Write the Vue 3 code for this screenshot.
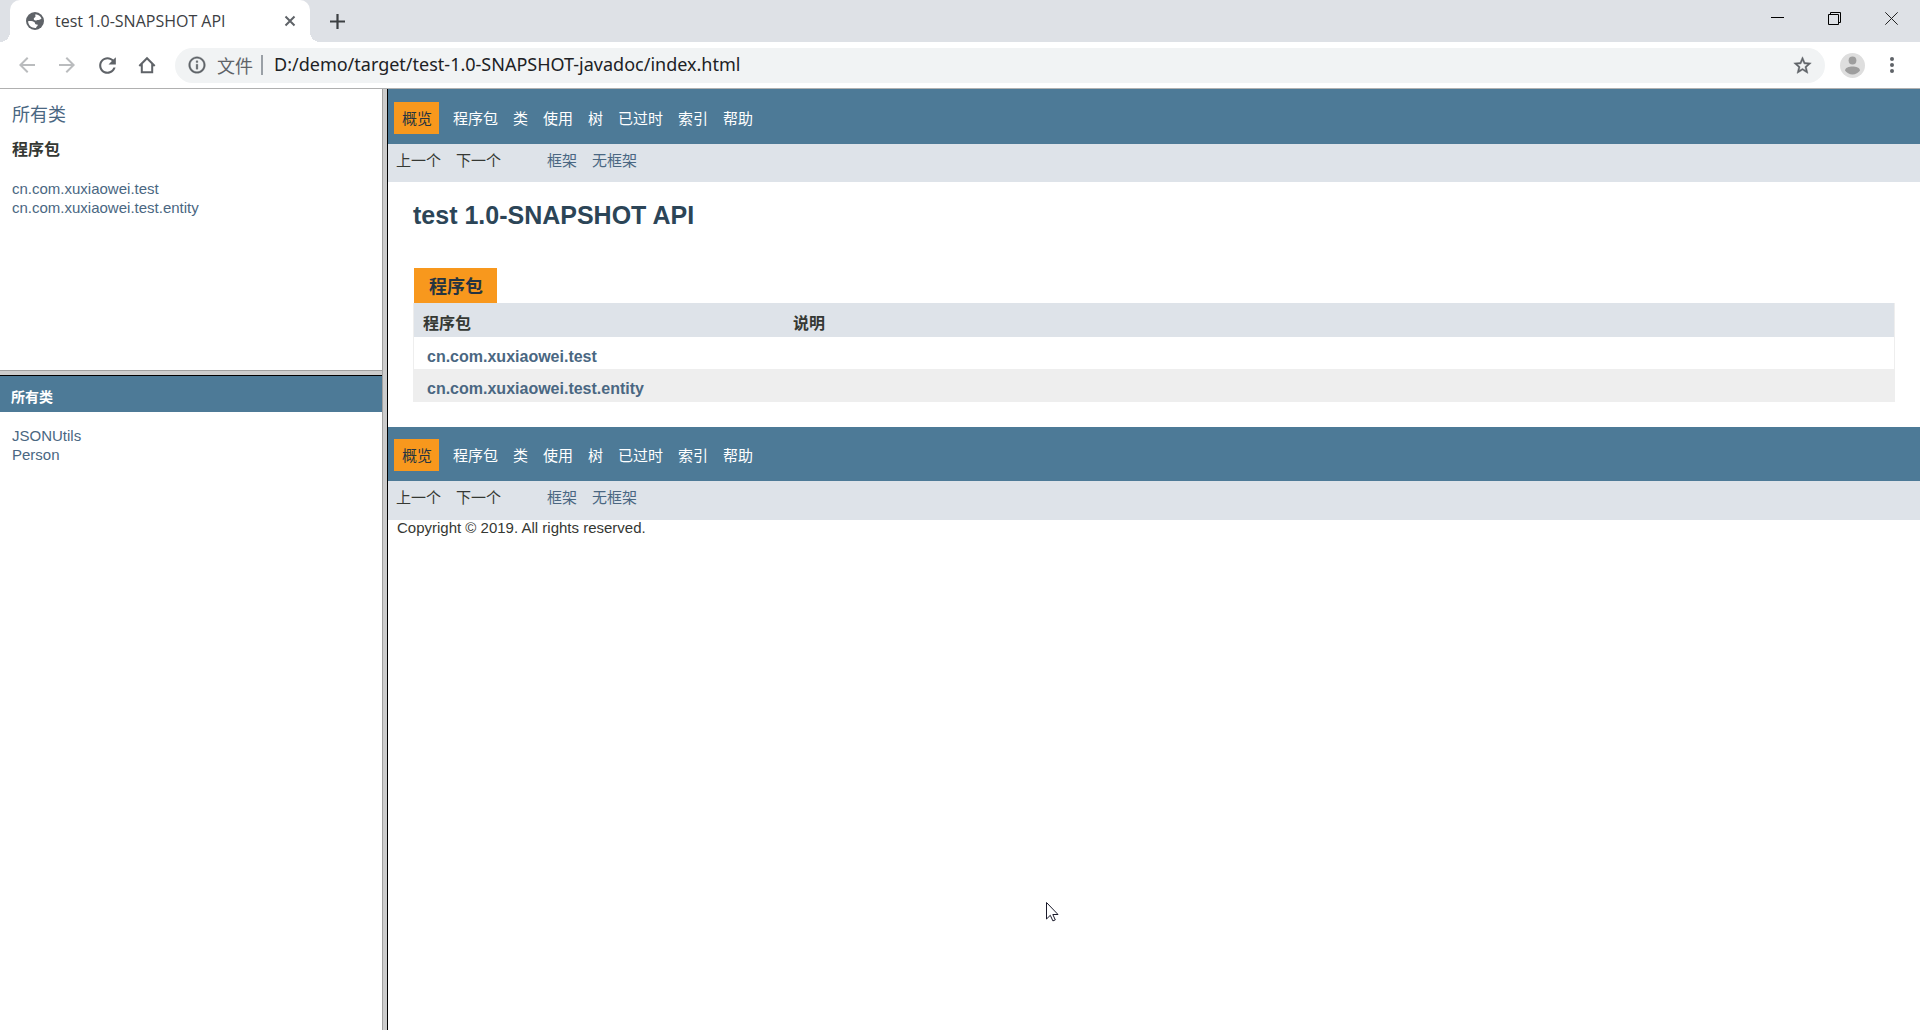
<script setup>
import { ref } from 'vue'

const address = ref('D:/demo/target/test-1.0-SNAPSHOT-javadoc/index.html')
const navItems = ['程序包', '类', '使用', '树', '已过时', '索引', '帮助']
const packages = ['cn.com.xuxiaowei.test', 'cn.com.xuxiaowei.test.entity']
const classes = ['JSONUtils', 'Person']
const bars = ['top', 'bottom']
</script>

<template>
  <div class="browser">
    <header class="tab-strip">
      <div class="tab">
        <svg class="favicon" viewBox="0 0 18 18" width="18" height="18" aria-hidden="true">
          <circle cx="9" cy="9" r="9" fill="#5f6368" />
          <path fill="#fff" d="M9.500 2.200c2.700.2 4.900 1.800 6 4.300-.9 1-2 1.500-3.300 1.400-1.300-.1-1.500.7-2.700.6-1.300-.1-2.100-1.200-1.600-2.300.4-.9 1.500-.8 1.600-1.800.1-.8-.5-1.200 0-2.200zM2.100 9.200c2.500-.3 5.300.1 6.400 1.100.8.8.2 1.500 1.100 2 1 .5 1.900-.1 2.100.7.2 1-1.200 1.200-1.700 2.900-3.900.4-7.800-2.200-7.900-6.700z" />
        </svg>
        <span class="tab-title">test 1.0-SNAPSHOT API</span>
        <button class="icon-button tab-close" aria-label="关闭标签页">
          <svg viewBox="0 0 12 12" width="12" height="12"><path d="M1.500 1.500l9 9M10.500 1.500l-9 9" stroke="#5f6368" stroke-width="2" /></svg>
        </button>
      </div>
      <button class="icon-button new-tab" aria-label="打开新的标签页">
        <svg viewBox="0 0 15 15" width="15" height="15"><path d="M7.500 0v15M0 7.500h15" stroke="#3c4043" stroke-width="2.200" /></svg>
      </button>
      <div class="window-controls">
        <button class="icon-button" aria-label="最小化">
          <svg viewBox="0 0 13 13" width="13" height="13"><path d="M0 5.500h13" stroke="#000" /></svg>
        </button>
        <button class="icon-button" aria-label="还原">
          <svg viewBox="0 0 13 13" width="13" height="13"><path d="M.5 2.500h10v10H.5zM2.500 2.500v-2h10v10h-2" fill="none" stroke="#000" /></svg>
        </button>
        <button class="icon-button" aria-label="关闭">
          <svg viewBox="0 0 13 13" width="13" height="13"><path d="M.3.3l12.400 12.400M12.700.3L.3 12.700" stroke="#222" /></svg>
        </button>
      </div>
    </header>

    <form class="toolbar" @submit.prevent>
      <button type="button" class="icon-button tool" aria-label="后退">
        <svg viewBox="0 0 24 24" width="24" height="24"><path fill="#babcbe" d="M20 11H7.830l5.590-5.590L12 4l-8 8 8 8 1.410-1.410L7.830 13H20v-2z" /></svg>
      </button>
      <button type="button" class="icon-button tool" aria-label="前进">
        <svg viewBox="0 0 24 24" width="24" height="24"><path fill="#babcbe" d="M12 4l-1.410 1.410L16.170 11H4v2h12.170l-5.580 5.590L12 20l8-8z" /></svg>
      </button>
      <button type="button" class="icon-button tool" aria-label="重新加载">
        <svg viewBox="0 0 24 24" width="25" height="25"><path fill="#5f6368" d="M17.650 6.350C16.200 4.900 14.210 4 12 4c-4.420 0-7.990 3.580-7.990 8s3.570 8 7.990 8c3.730 0 6.840-2.550 7.730-6h-2.080c-.82 2.330-3.040 4-5.650 4-3.310 0-6-2.690-6-6s2.690-6 6-6c1.660 0 3.140.69 4.220 1.780L13 11h7V4l-2.350 2.350z" /></svg>
      </button>
      <button type="button" class="icon-button tool" aria-label="主页">
        <svg viewBox="0 0 18 18" width="18" height="18"><path d="M1.300 10L9 2.200l7.700 7.800M3.800 8v8.200h10.400V8" fill="none" stroke="#5f6368" stroke-width="2" /></svg>
      </button>
      <div class="omnibox">
        <svg viewBox="0 0 24 24" width="20" height="20" aria-hidden="true"><path fill="#5f6368" d="M11 17h2v-6h-2v6zm1-15C6.480 2 2 6.480 2 12s4.480 10 10 10 10-4.480 10-10S17.520 2 12 2zm0 18c-4.410 0-8-3.590-8-8s3.590-8 8-8 8 3.590 8 8-3.590 8-8 8zM11 9h2V7h-2v2z" stroke="#5f6368" stroke-width=".4" /></svg>
        <label class="scheme" for="address">文件</label>
        <input id="address" v-model="address" class="address" type="text" spellcheck="false" />
        <button type="button" class="icon-button star" aria-label="收藏">
          <svg viewBox="0 0 24 24" width="21" height="21"><path fill="#5f6368" d="M22 9.240l-7.190-.62L12 2 9.190 8.630 2 9.240l5.460 4.730L5.820 21 12 17.270 18.180 21l-1.630-7.030L22 9.240zM12 15.400l-3.760 2.270 1-4.280-3.320-2.880 4.380-.38L12 6.100l1.710 4.040 4.380.38-3.320 2.880 1 4.280L12 15.400z" stroke="#5f6368" stroke-width=".5" /></svg>
        </button>
      </div>
      <button type="button" class="icon-button tool profile" aria-label="用户">
        <svg viewBox="0 0 25 25" width="25" height="25"><circle cx="12.500" cy="12.500" r="12.500" fill="#dedede" /><circle cx="12.500" cy="7.500" r="3.900" fill="#9e9e9e" /><path fill="#9e9e9e" d="M5 17.500c0-2.700 4-4.100 7.500-4.100s7.500 1.400 7.500 4.100c-1.500 2.400-4.300 3.900-7.500 3.900s-6-1.500-7.500-3.900z" /></svg>
      </button>
      <button type="button" class="icon-button tool" aria-label="菜单">
        <svg viewBox="0 0 18 18" width="18" height="18"><g fill="#5f6368"><circle cx="9" cy="3" r="2" /><circle cx="9" cy="9" r="2" /><circle cx="9" cy="15" r="2" /></g></svg>
      </button>
    </form>

    <div class="frames">
      <aside class="side">
        <nav class="packages-frame">
          <a class="all-classes" href="#">所有类</a>
          <h2 class="side-heading">程序包</h2>
          <ul class="side-list">
            <li v-for="name in packages" :key="name"><a href="#">{{ name }}</a></li>
          </ul>
        </nav>
        <div class="split-h"></div>
        <nav class="classes-frame">
          <h1 class="bar">所有类</h1>
          <ul class="side-list">
            <li v-for="name in classes" :key="name"><a href="#">{{ name }}</a></li>
          </ul>
        </nav>
      </aside>
      <div class="split-v"></div>
      <div class="content">
        <template v-for="bar in bars" :key="bar">
          <nav :class="bar">
            <ul class="nav-list">
              <li class="current">概览</li>
              <li v-for="item in navItems" :key="item">{{ item }}</li>
            </ul>
            <div class="sub-nav">
              <ul class="sub-list">
                <li>上一个</li>
                <li>下一个</li>
              </ul>
              <ul class="sub-list">
                <li><a href="#">框架</a></li>
                <li><a href="#">无框架</a></li>
              </ul>
            </div>
          </nav>
          <main v-if="bar === 'top'">
            <h1 class="title">test 1.0-SNAPSHOT API</h1>
            <table class="overview">
              <caption><span>程序包</span></caption>
              <thead>
                <tr>
                  <th class="col-first" scope="col">程序包</th>
                  <th scope="col">说明</th>
                </tr>
              </thead>
              <tbody>
                <tr v-for="name in packages" :key="name">
                  <td><a href="#">{{ name }}</a></td>
                  <td></td>
                </tr>
              </tbody>
            </table>
          </main>
        </template>
        <p class="legal">Copyright © 2019. All rights reserved.</p>
      </div>
    </div>

    <svg class="pointer" viewBox="0 0 13 20" width="13" height="20" aria-hidden="true">
      <path d="M.5.500v16.500l3.800-3.700 2.600 5.600 2.400-1-2.500-5.400h5.200z" fill="#fff" stroke="#1a1a2a" />
    </svg>
  </div>
</template>

<style>
body {
  margin: 0;
  background: #fff;
}
</style>

<style scoped>
.browser {
  position: relative;
  display: flex;
  flex-direction: column;
  min-height: 100vh;
  color: #353833;
  font-family: "Liberation Sans", "Noto Sans CJK SC", sans-serif;
  font-size: 15px;
}

h1,
h2,
p,
ul {
  margin: 0;
  padding: 0;
}

ul {
  list-style: none;
}

a {
  color: #4a6782;
  text-decoration: none;
}

svg {
  display: block;
  flex: none;
}

.icon-button {
  display: flex;
  align-items: center;
  justify-content: center;
  padding: 0;
  border: 0;
  background: none;
}

.tab-strip {
  display: flex;
  height: 42px;
  padding-left: 10px;
  background: #dee1e6;
}

.tab {
  position: relative;
  display: flex;
  align-items: center;
  box-sizing: border-box;
  width: 300px;
  padding: 0 14px 0 16px;
  border-radius: 10px 10px 0 0;
  background: #fff;
}

.tab::before,
.tab::after {
  content: "";
  position: absolute;
  bottom: 0;
  width: 10px;
  height: 10px;
}

.tab::before {
  right: 100%;
  background: radial-gradient(circle at 0 0, #dee1e6 10px, #fff 10px);
}

.tab::after {
  left: 100%;
  background: radial-gradient(circle at 100% 0, #dee1e6 10px, #fff 10px);
}

.tab-title {
  flex: 1;
  margin-left: 11px;
  color: #3c4043;
  font-family: "Open Sans", "Noto Sans CJK SC", sans-serif;
  font-size: 16px;
}

.new-tab {
  width: 55px;
}

.window-controls {
  display: flex;
  height: 37px;
  margin-left: auto;
}

.window-controls .icon-button {
  width: 57px;
}

.toolbar {
  display: flex;
  align-items: center;
  height: 46px;
  padding: 0 8px 0 7px;
  border-bottom: 1px solid #b0b0b0;
}

.tool {
  width: 40px;
  height: 40px;
}

.profile {
  margin-left: 7px;
}

.omnibox {
  display: flex;
  flex: 1;
  align-items: center;
  box-sizing: border-box;
  height: 35px;
  margin-left: 8px;
  padding: 0 12px;
  border-radius: 18px;
  background: #f1f3f4;
  font-family: "Noto Sans", "Noto Sans CJK SC", sans-serif;
  font-size: 18px;
}

.scheme {
  margin-left: 10px;
  padding-right: 8px;
  border-right: 2px solid #9aa0a6;
  color: #5f6368;
  font-family: "Noto Sans CJK SC", sans-serif;
  line-height: 20px;
}

.address {
  flex: 1;
  min-width: 0;
  margin-left: 11px;
  padding: 0 0 2px;
  border: 0;
  outline: 0;
  background: none;
  color: #202124;
  font: inherit;
}

.frames {
  display: flex;
  flex: 1;
}

.side {
  display: flex;
  flex: none;
  flex-direction: column;
  width: 382px;
}

.packages-frame {
  box-sizing: border-box;
  height: 281px;
  padding: 13px 12px;
}

.all-classes {
  display: block;
  font-size: 18px;
  line-height: 26px;
}

.side-heading {
  margin: 10px 0 17px;
  font-size: 16px;
  line-height: 24px;
}

.side-list {
  line-height: 19px;
}

.split-h {
  box-sizing: border-box;
  height: 6px;
  border-top: 1px solid #a0a0a0;
  border-bottom: 1px solid #000;
  background: #ccc;
}

.split-v {
  box-sizing: border-box;
  flex: none;
  width: 6px;
  border-left: 1px solid #a0a0a0;
  border-right: 1px solid #000;
  background: #ccc;
}

.bar {
  padding: 11px 11px 5px;
  background: #4d7a97;
  color: #fff;
  font-size: 14px;
  line-height: 20px;
}

.classes-frame .side-list {
  padding: 14px 12px;
}

.content {
  flex: 1;
  min-width: 0;
}

.nav-list {
  display: flex;
  align-items: center;
  gap: 15px;
  height: 55px;
  padding: 3px 6px 0;
  box-sizing: border-box;
  background: #4d7a97;
  color: #fff;
  line-height: 22px;
}

.nav-list li {
  padding-top: 2px;
}

.nav-list .current {
  margin-right: -1px;
  padding: 6px 7px 4px 8px;
  background: #f8981d;
  color: #253441;
}

.bottom .nav-list {
  height: 54px;
  padding-top: 2px;
}

.sub-nav {
  display: flex;
  gap: 46px;
  height: 29px;
  padding: 6px 8px 3px;
  background: #dee3e9;
  line-height: 22px;
}

.bottom .sub-nav {
  height: 30px;
}

.sub-list {
  display: flex;
  gap: 15px;
}

.title {
  padding: 17px 25px 0;
  color: #2c4557;
  font-size: 25px;
  line-height: 32px;
}

.overview {
  width: calc(100% - 50px);
  margin: 37px 25px 25px;
  border: 1px solid #eee;
  border-top: 0;
  border-collapse: separate;
  border-spacing: 0;
  table-layout: fixed;
}

.overview caption {
  text-align: left;
}

.overview caption span {
  display: inline-block;
  margin-left: 1px;
  padding: 7px 14px 4px 15px;
  background: #f8981d;
  color: #253441;
  font-size: 18px;
  font-weight: bold;
  line-height: 24px;
  vertical-align: top;
}

.overview th {
  padding: 9px 9px 1px;
  background: #dee3e9;
  font-size: 16px;
  line-height: 24px;
  text-align: left;
}

.overview .col-first {
  width: 25%;
  box-sizing: border-box;
}

.overview td {
  padding: 10px 13px 2px;
  font-size: 16px;
  font-weight: bold;
  line-height: 20px;
}

.overview tbody tr:nth-child(even) {
  background: #eee;
}

.legal {
  padding: 0 9px;
  line-height: 16px;
}

.pointer {
  position: absolute;
  top: 902px;
  left: 1046px;
}
</style>
